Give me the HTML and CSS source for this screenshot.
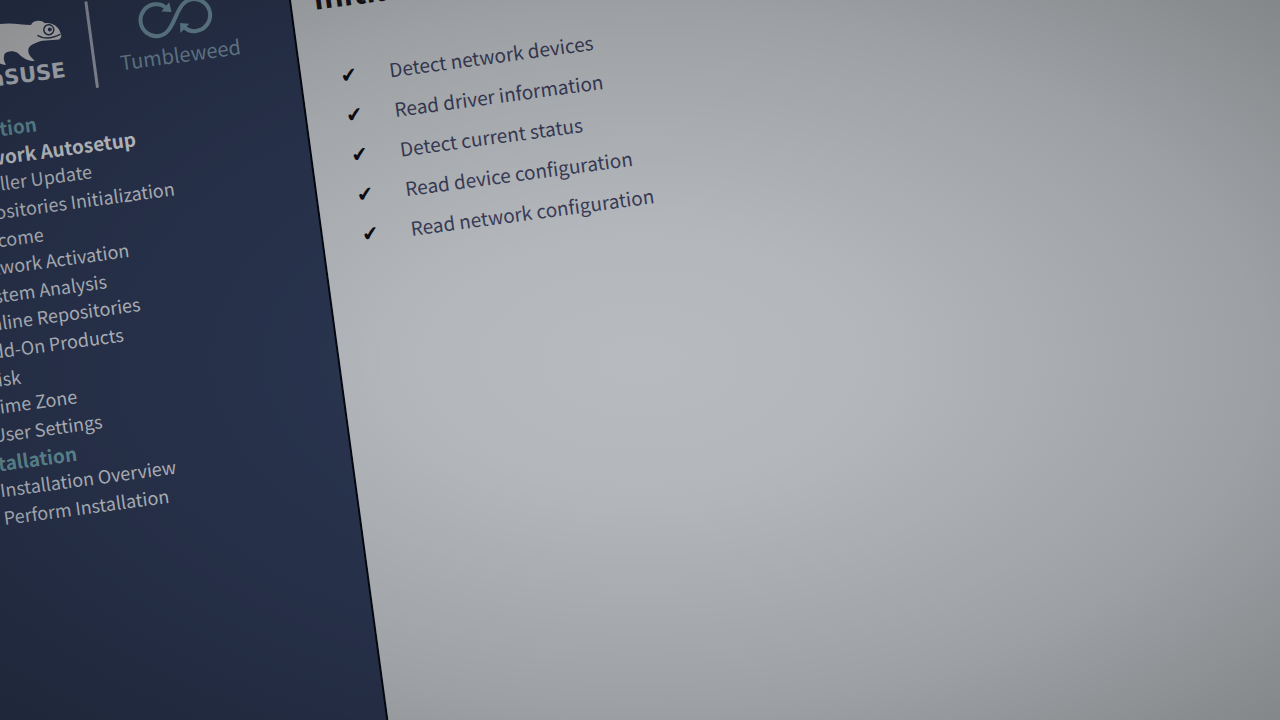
FILE: index.html
```html
<!DOCTYPE html>
<html lang="en">
<head>
<meta charset="utf-8">
<title>openSUSE Tumbleweed Installation</title>
<link rel="stylesheet" href="styles.css">
</head>
<body>
<div class="scene">
  <aside class="sidebar">
    <div class="brand">
      <div class="opensuse">
        <svg class="chameleon" viewBox="50 44 120 44" aria-hidden="true">
          <path class="chameleon-body" d="M50 62C64 50 88 45 106 46C118 45 128 49 139 51C141 47 147 47 151 49L153 51C160 51 166 56 167 62C168 65 168 67 165 69L148 68C140 69 134 71 133 75C132 79 134 83 138 87C131 87 126 82 122 77C119 74 112 73 109 76C107 80 107 83 109 87C102 86 99 82 98 76L80 76L60 84Z"/>
          <path class="chameleon-line" d="M144 62C150 67 159 67 167 64"/>
          <circle class="chameleon-line" cx="156" cy="58" r="5"/>
          <circle class="pupil" cx="157" cy="58" r="2"/>
        </svg>
        <span class="wordmark">openSUSE</span>
      </div>
      <div class="divider"></div>
      <div class="tumbleweed">
        <svg class="infinity" viewBox="0 0 76 40" aria-hidden="true">
          <path class="loop" d="M30 9C27 5 23 4 19 4A16 16 0 0 0 19 36C27 36 32 30 38 20S49 4 57 4A16 16 0 0 1 57 36C53 36 49 35 46 31"/>
          <path class="head" d="M34 4L35 14L25 12ZM42 26L41 36L51 28Z"/>
        </svg>
        <span>Tumbleweed</span>
      </div>
    </div>
    <nav class="steps" aria-label="Installation steps">
      <h2>Preparation</h2>
      <p class="current">Network Autosetup</p>
      <p>Installer Update</p>
      <p>Repositories Initialization</p>
      <p>Welcome</p>
      <p>Network Activation</p>
      <p>System Analysis</p>
      <p>Online Repositories</p>
      <p>Add-On Products</p>
      <p>Disk</p>
      <p>Time Zone</p>
      <p>User Settings</p>
      <h2>Installation</h2>
      <p>Installation Overview</p>
      <p>Perform Installation</p>
    </nav>
  </aside>
  <main class="content">
    <h1>Initializing Network Configuration</h1>
    <ul class="tasks">
      <li><span class="tick">✔</span>Detect network devices</li>
      <li><span class="tick">✔</span>Read driver information</li>
      <li><span class="tick">✔</span>Detect current status</li>
      <li><span class="tick">✔</span>Read device configuration</li>
      <li><span class="tick">✔</span>Read network configuration</li>
    </ul>
  </main>
</div>
<div class="vignette"></div>
</body>
</html>
```
FILE: styles.css
```css
* { box-sizing: border-box; }
body {
  margin: 0;
  height: 100vh;
  overflow: hidden;
  position: relative;
  background: #2a3550;
  font-family: "Noto Sans CJK SC", "Noto Sans", sans-serif;
}
h1, h2, p, ul { margin: 0; padding: 0; }
.scene {
  display: grid;
  grid-template-columns: 400px 1fr;
  min-height: calc(100vh + 200px);
  margin: -60px -140px 0 -109px;
  transform-origin: 400px 60px;
  transform: rotate(-7.7deg);
}
.sidebar {
  background: #2a3550;
  border-right: 2px solid #05080f;
  color: #bdc1ca;
  padding-top: 34px;
}
.brand {
  display: flex;
  height: 87px;
}
.opensuse {
  width: 170px;
  margin-right: 25px;
  padding-top: 9px;
  display: flex;
  flex-direction: column;
  align-items: flex-end;
}
.chameleon { width: 120px; height: 44px; fill: #c3c4c6; }
.chameleon .pupil { fill: #2a3550; }
.chameleon .chameleon-line { fill: none; stroke: #2a3550; stroke-width: 1.5; }
.wordmark {
  font: bold 21px/24px "DejaVu Sans", sans-serif;
  color: #bcc0c8;
  padding-right: 3px;
}
.divider { width: 3px; background: #969cab; }
.tumbleweed {
  width: 120px;
  margin-left: 25px;
  padding-top: 8px;
  display: flex;
  flex-direction: column;
  align-items: center;
  font-size: 20px;
  line-height: 34px;
  color: #70889a;
}
.infinity { width: 76px; height: 40px; }
.loop { fill: none; stroke: #6a8a9c; stroke-width: 4; }
.head { fill: #6a8a9c; }
.steps {
  display: flex;
  flex-direction: column;
  justify-content: space-between;
  height: 414px;
  margin-top: 13px;
  padding-left: 20px;
  font-size: 18px;
  line-height: 27px;
}
.steps h2 { font-size: 19px; line-height: 27px; color: #64919c; }
.steps p { padding-left: 26px; }
.steps .current { font-size: 19px; font-weight: bold; color: #cdd0d7; }
.content { background: #b7bbbf; padding: 34px 22px; }
h1 { font-size: 31px; line-height: 52px; color: #15161c; }
.tasks { list-style: none; margin-top: 36px; color: #3a3c58; font-size: 19px; line-height: 40px; }
.tasks li { display: flex; }
.tick { width: 66px; padding-left: 17px; color: #0c0d14; font-family: "DejaVu Sans", sans-serif; font-size: 20px; }
.vignette {
  position: absolute;
  inset: 0;
  background: radial-gradient(ellipse at center, rgba(0,0,0,0) 0%, rgba(0,0,0,.02) 25%, rgba(0,0,0,.14) 68%, rgba(0,0,0,.28) 100%);
  pointer-events: none;
}
```
